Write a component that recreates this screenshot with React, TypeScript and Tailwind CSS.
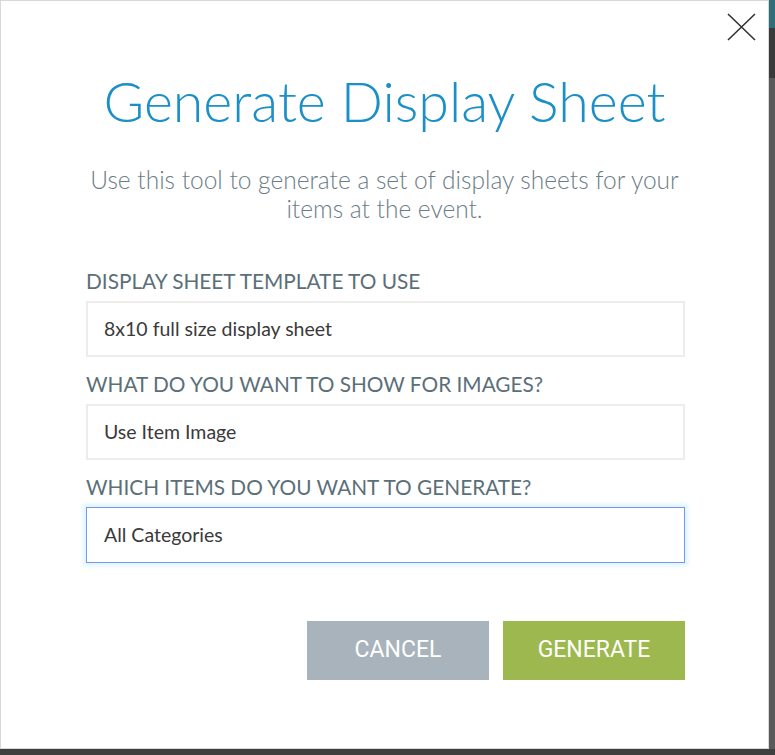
const fields = [
    { label: "DISPLAY SHEET TEMPLATE TO USE", value: "8x10 full size display sheet", focused: false },
    { label: "WHAT DO YOU WANT TO SHOW FOR IMAGES?", value: "Use Item Image", focused: false },
    { label: "WHICH ITEMS DO YOU WANT TO GENERATE?", value: "All Categories", focused: true },
]

export default function App() {
    return (
        <div className="flex h-[755px] w-[775px] flex-col bg-[#4a4a4a]">
            <div className="flex flex-1">
                <div className="relative flex-1 border border-[#d8d8d8] bg-white font-['Lato',sans-serif]">
                    {/* close */}
                    <button className="absolute right-[12px] top-[12px] text-[#333]">
                        <svg width="29" height="28" viewBox="0 0 29 28" fill="none" stroke="currentColor" strokeWidth="1.6">
                            <path d="M1 1 L28 27 M28 1 L1 27" />
                        </svg>
                    </button>

                    <h1 className="pt-[66px] text-center text-[55.5px] font-light leading-[68px] text-[#1b8fc7]">
                        Generate Display Sheet
                    </h1>

                    <p className="mx-auto mt-[30px] w-[610px] text-center text-[24.5px] font-light leading-[29px] text-[#6c7d86]">
                        Use this tool to generate a set of display sheets for your items at the event.
                    </p>

                    <div className="ml-[85px] mr-[83px] mt-[46px] flex flex-col">
                        {fields.map((f) => (
                            <div key={f.label} className="flex flex-col">
                                <label className="text-[20.8px] leading-[24px] text-[#5b6f79]">{f.label}</label>
                                <div
                                    className={
                                        f.focused
                                            ? "mt-[8px] mb-[15px] flex h-[56px] items-center border border-[#7b95ec] px-[17px] text-[19.5px] text-[#3a3a3a] shadow-[0_0_4px_3px_#dcf6ff]"
                                            : "mt-[8px] mb-[15px] flex h-[56px] items-center border-2 border-[#ececec] px-[16px] text-[19.5px] text-[#3a3a3a]"
                                    }
                                >
                                    {f.value}
                                </div>
                            </div>
                        ))}
                    </div>

                    <div className="mr-[83px] mt-[43px] flex justify-end gap-[14px] font-['Roboto',sans-serif]">
                        <button className="h-[59px] w-[182px] bg-[#a9b3bb] text-[23px] text-white">CANCEL</button>
                        <button className="h-[59px] w-[182px] bg-[#9db84e] text-[23px] text-white">GENERATE</button>
                    </div>
                </div>
                <div className="flex w-[6px] flex-col">
                    <div className="h-[28px] bg-[#2e6f7a]" />
                    <div className="h-[50px] bg-[#3a3a3a]" />
                    <div className="flex-1 bg-[#5a5a5a]" />
                </div>
            </div>
            <div className="h-[6px] bg-[#3f3f3f]" />
        </div>
    )
}
